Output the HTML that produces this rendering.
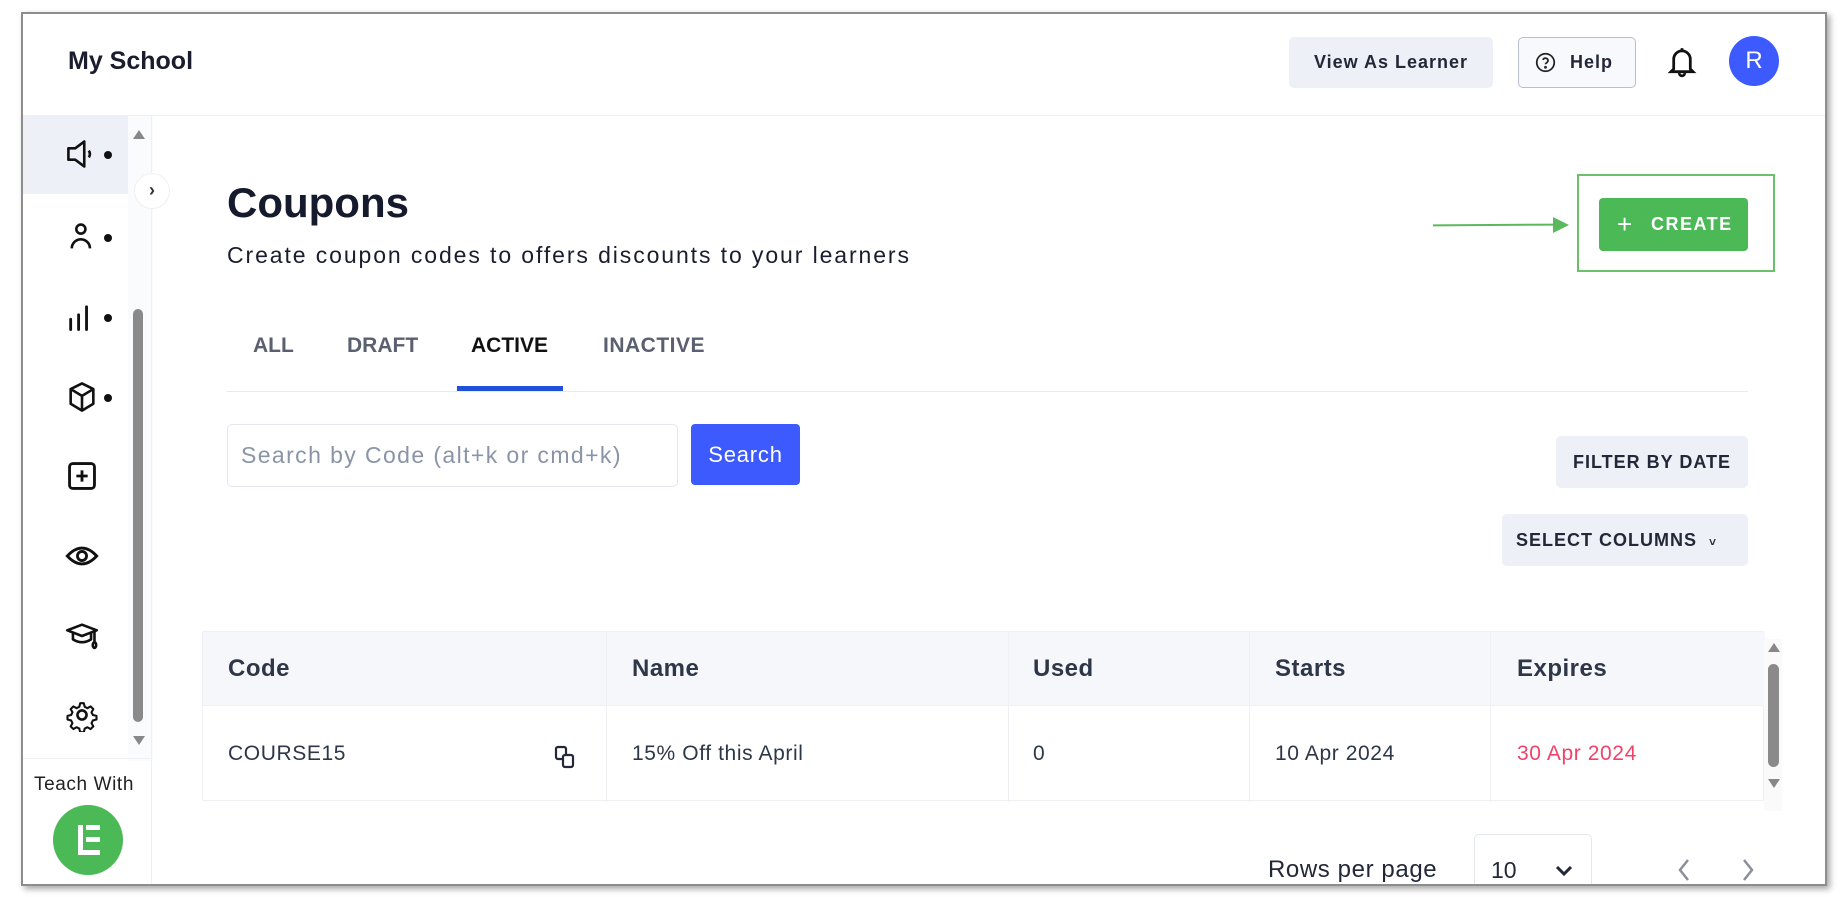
<!DOCTYPE html>
<html><head><meta charset="utf-8">
<style>
*{margin:0;padding:0;box-sizing:border-box}
body{width:1848px;height:897px;background:#fff;font-family:"Liberation Sans",sans-serif;color:#1a1d2e;position:relative;overflow:hidden}
.a{position:absolute}
.frame{left:21px;top:12px;width:1806px;height:874px;border:2px solid #8d8d8d;box-shadow:3px 3px 6px rgba(0,0,0,.35);background:#fff;overflow:hidden}
.ic{position:absolute;left:-3px;width:34px;height:34px}
.dot{position:absolute;width:8px;height:8px;border-radius:50%;background:#111}
.btn{position:absolute;border-radius:5px;background:#edf0f6;font-weight:bold;color:#222838;text-align:center;letter-spacing:1px}
.th{position:absolute;top:0;height:74px;line-height:74px;font-size:24px;font-weight:bold;color:#2d3748;letter-spacing:.5px}
.td{position:absolute;top:74px;height:96px;line-height:96px;font-size:21px;color:#2d3748;letter-spacing:.6px}
</style></head><body>
<div class="a frame">
<div class="a" style="left:45px;top:33px;font-size:25px;font-weight:bold;color:#1a1d2e">My School</div>
<div class="a" style="left:0;top:101px;width:1806px;height:1px;background:#eef0f4"></div>

<div class="btn" style="left:1266px;top:23px;width:204px;height:51px;line-height:51px;font-size:18px">View As Learner</div>
<div class="a" style="left:1495px;top:23px;width:118px;height:51px;border:1.5px solid #b8bfcc;border-radius:5px;background:#f8f9fc;font-size:18px;font-weight:bold;line-height:48px;letter-spacing:1px;color:#222838">
<svg style="position:absolute;left:16px;top:14px" width="21" height="21" viewBox="0 0 24 24" fill="none" stroke="#222" stroke-width="2"><circle cx="12" cy="12" r="10"/><path d="M9.1 9a3 3 0 0 1 5.8 1c0 2-3 2.5-3 4"/><circle cx="12" cy="17.5" r=".6" fill="#222"/></svg>
<span style="position:absolute;left:51px">Help</span></div>
<svg class="a" style="left:1642px;top:30px" width="34" height="36" viewBox="0 0 24 26" fill="none" stroke="#111" stroke-width="2"><path d="M6 18V11a6 6 0 0 1 12 0v7l2 2H4z"/><path d="M10 21a2 2 0 0 0 4 0"/><path d="M12 3v2"/></svg>
<div class="a" style="left:1706px;top:22px;width:50px;height:50px;border-radius:50%;background:#3d5afe;color:#fff;font-size:24px;line-height:50px;text-align:center">R</div>

<div class="a" style="left:0;top:102px;width:105px;height:78px;background:#eef0f8"></div>
<div class="a" style="left:105px;top:102px;width:25px;height:645px;background:#fafbfc"></div>
<div class="a" style="left:128px;top:102px;width:1px;height:770px;background:#eef0f4"></div>
<div class="a" style="left:110px;top:116px;width:0;height:0;border-left:6px solid transparent;border-right:6px solid transparent;border-bottom:9px solid #888"></div>
<div class="a" style="left:110px;top:295px;width:10px;height:413px;border-radius:5px;background:#8a8a8a"></div>
<div class="a" style="left:110px;top:722px;width:0;height:0;border-left:6px solid transparent;border-right:6px solid transparent;border-top:9px solid #888"></div>
<div class="a" style="left:111px;top:159px;width:36px;height:36px;border-radius:50%;background:#fff;border:1px solid #eef0f4;font-size:18px;font-weight:bold;text-align:center;line-height:33px;color:#333">›</div>

<div class="a" style="left:45px;top:123px">
<svg class="ic" style="top:0" viewBox="0 0 30 30" fill="none" stroke="#111" stroke-width="2.3" stroke-linejoin="round"><path d="M3 10h6l8-6v22l-8-6H3z"/><path d="M21 12q2 3 0 6"/></svg><div class="dot" style="left:36px;top:14px"></div>
<svg class="ic" style="top:83px" viewBox="0 0 30 30" fill="none" stroke="#111" stroke-width="2.3"><circle cx="14" cy="8" r="4"/><path d="M6 25a8 8 0 0 1 16 0"/></svg><div class="dot" style="left:36px;top:97px"></div>
<svg class="ic" style="top:163px" viewBox="0 0 30 30" fill="none" stroke="#111" stroke-width="2.5" stroke-linecap="round"><path d="M5 17v9M12 13v13M19 6v20"/></svg><div class="dot" style="left:36px;top:177px"></div>
<svg class="ic" style="top:243px" viewBox="0 0 30 30" fill="none" stroke="#111" stroke-width="2.3" stroke-linejoin="round"><path d="M15 3l10 5v13l-10 6-10-6V8z"/><path d="M5 8l10 6 10-6M15 14v13"/></svg><div class="dot" style="left:36px;top:257px"></div>
<svg class="ic" style="top:322px" viewBox="0 0 30 30" fill="none" stroke="#111" stroke-width="2.5"><rect x="4" y="4" width="22" height="22" rx="3"/><path d="M15 10v10M10 15h10"/></svg>
<svg class="ic" style="top:402px" viewBox="0 0 30 30" fill="none" stroke="#111" stroke-width="2.5"><path d="M2 15q13-14 26 0q-13 14-26 0z"/><circle cx="15" cy="15" r="4"/></svg>
<svg class="ic" style="top:482px" viewBox="0 0 30 30" fill="none" stroke="#111" stroke-width="2.3" stroke-linejoin="round"><path d="M2 10l13-5 13 5-13 5z"/><path d="M7 12v6q8 5 16 0v-6"/><path d="M26 11v10"/><ellipse cx="26" cy="23" rx="1.5" ry="2.5"/></svg>
<svg class="ic" style="top:561px" viewBox="0 0 30 30" fill="none" stroke="#111" stroke-width="2.3" stroke-linejoin="round"><path d="M13 2h4l1 4 3 1.5 3.5-2 3 3-2 3.5 1.5 3 4 1v4l-4 1-1.5 3 2 3.5-3 3-3.5-2-3 1.5-1 4h-4l-1-4-3-1.5-3.5 2-3-3 2-3.5-1.5-3-4-1v-4l4-1 1.5-3-2-3.5 3-3 3.5 2 3-1.5z" transform="translate(3 3) scale(.8)"/><circle cx="15" cy="15" r="4"/></svg>
</div>

<div class="a" style="left:0;top:744px;width:128px;height:1px;background:#eef0f4"></div>
<div class="a" style="left:11px;top:760px;font-size:19px;color:#222;letter-spacing:.6px">Teach With</div>
<div class="a" style="left:30px;top:791px;width:70px;height:70px;border-radius:50%;background:#4cb957">
<div class="a" style="left:25px;top:20px;width:5px;height:30px;background:#fff"></div>
<div class="a" style="left:25px;top:45px;width:22px;height:5px;background:#fff"></div>
<div class="a" style="left:33px;top:20px;width:14px;height:5px;background:#fff"></div>
<div class="a" style="left:33px;top:32px;width:14px;height:5px;background:#fff"></div>
</div>

<div class="a" style="left:204px;top:165px;font-size:42px;font-weight:bold;color:#151a2d">Coupons</div>
<div class="a" style="left:204px;top:228px;font-size:23px;color:#1a1d2e;letter-spacing:1.9px">Create coupon codes to offers discounts to your learners</div>

<div class="a" style="left:1410px;top:210px;width:125px;height:2px;background:#5cb85c;transform:rotate(-0.4deg)"></div>
<div class="a" style="left:1530px;top:203px;width:0;height:0;border-top:8px solid transparent;border-bottom:8px solid transparent;border-left:16px solid #5cb85c"></div>
<div class="a" style="left:1554px;top:160px;width:198px;height:98px;border:2px solid #6cc06c"></div>
<div class="a" style="left:1576px;top:184px;width:149px;height:53px;border-radius:4px;background:#4cb957;color:#fff;font-size:18px;font-weight:bold;letter-spacing:1.5px;line-height:53px"><span style="position:absolute;left:18px;font-size:26px;font-weight:normal">+</span><span style="position:absolute;left:52px">CREATE</span></div>

<div class="a" style="left:230px;top:320px;font-size:21px;font-weight:bold;color:#5a6070">ALL</div>
<div class="a" style="left:324px;top:320px;font-size:21px;font-weight:bold;color:#5a6070">DRAFT</div>
<div class="a" style="left:448px;top:320px;font-size:21px;font-weight:bold;color:#111">ACTIVE</div>
<div class="a" style="left:580px;top:320px;font-size:21px;font-weight:bold;color:#5a6070;letter-spacing:.5px">INACTIVE</div>
<div class="a" style="left:204px;top:377px;width:1521px;height:1px;background:#e6e9ef"></div>
<div class="a" style="left:434px;top:372px;width:106px;height:5px;background:#1e50d8"></div>

<div class="a" style="left:204px;top:410px;width:451px;height:63px;border:1px solid #e4e7ee;border-radius:5px;font-size:23px;color:#8a94a6;line-height:61px;padding-left:13px;letter-spacing:1.4px;white-space:nowrap">Search by Code (alt+k or cmd+k)</div>
<div class="a" style="left:668px;top:410px;width:109px;height:61px;border-radius:4px;background:#3d5afe;color:#fff;font-size:22px;line-height:61px;text-align:center;letter-spacing:.8px">Search</div>

<div class="btn" style="left:1533px;top:422px;width:192px;height:52px;line-height:52px;font-size:18px">FILTER BY DATE</div>
<div class="btn" style="left:1479px;top:500px;width:246px;height:52px;line-height:52px;font-size:18px;text-align:left;padding-left:14px">SELECT COLUMNS <span style="font-size:12px;margin-left:6px">˅</span></div>

<div class="a" style="left:179px;top:617px;width:1562px;height:170px;border:1px solid #eef0f4">
<div class="a" style="left:0;top:0;width:1562px;height:74px;background:#f6f7fb;border-bottom:1px solid #eef0f4"></div>
<div class="a" style="left:403px;top:0;width:1px;height:170px;background:#eef0f4"></div>
<div class="a" style="left:805px;top:0;width:1px;height:170px;background:#eef0f4"></div>
<div class="a" style="left:1046px;top:0;width:1px;height:170px;background:#eef0f4"></div>
<div class="a" style="left:1287px;top:0;width:1px;height:170px;background:#eef0f4"></div>
<div class="th" style="left:25px">Code</div>
<div class="th" style="left:429px">Name</div>
<div class="th" style="left:830px">Used</div>
<div class="th" style="left:1072px">Starts</div>
<div class="th" style="left:1314px">Expires</div>
<div class="td" style="left:25px">COURSE15</div>
<svg class="a" style="left:351px;top:113px" width="22" height="24" viewBox="0 0 22 24" fill="none" stroke="#222838" stroke-width="2.2"><rect x="2" y="2" width="10" height="12" rx="2"/><rect x="9" y="10" width="10" height="12" rx="2" fill="#fff"/></svg>
<div class="td" style="left:429px">15% Off this April</div>
<div class="td" style="left:830px">0</div>
<div class="td" style="left:1072px">10 Apr 2024</div>
<div class="td" style="left:1314px;color:#f0436a">30 Apr 2024</div>
</div>
<div class="a" style="left:1741px;top:625px;width:18px;height:172px;background:#fafafa"></div>
<div class="a" style="left:1745px;top:629px;width:0;height:0;border-left:6px solid transparent;border-right:6px solid transparent;border-bottom:9px solid #888"></div>
<div class="a" style="left:1745px;top:650px;width:11px;height:103px;border-radius:6px;background:#8a8a8a"></div>
<div class="a" style="left:1745px;top:765px;width:0;height:0;border-left:6px solid transparent;border-right:6px solid transparent;border-top:9px solid #888"></div>

<div class="a" style="left:1245px;top:842px;font-size:24px;color:#222838;letter-spacing:.6px">Rows per page</div>
<div class="a" style="left:1451px;top:820px;width:118px;height:70px;border:1px solid #e4e7ee;border-radius:5px">
<span class="a" style="left:16px;top:22px;font-size:23px;color:#222838">10</span>
<svg class="a" style="left:80px;top:30px" width="18" height="12" viewBox="0 0 18 12" fill="none" stroke="#222838" stroke-width="3"><path d="M2 2l7 7 7-7"/></svg>
</div>
<svg class="a" style="left:1654px;top:844px" width="14" height="24" viewBox="0 0 14 24" fill="none" stroke="#8a8f99" stroke-width="2.5"><path d="M11 2L3 12l8 10"/></svg>
<svg class="a" style="left:1718px;top:844px" width="14" height="24" viewBox="0 0 14 24" fill="none" stroke="#8a8f99" stroke-width="2.5"><path d="M3 2l8 10-8 10"/></svg>
</div>
</body></html>
